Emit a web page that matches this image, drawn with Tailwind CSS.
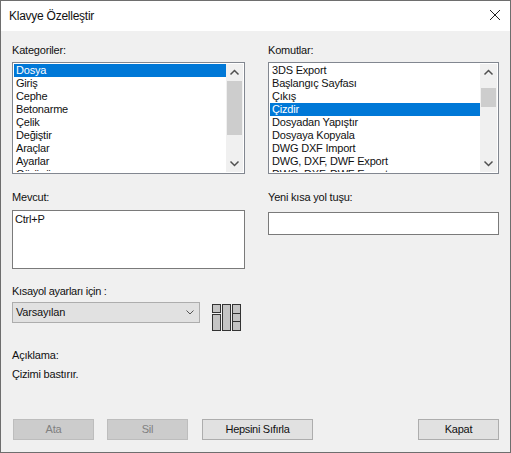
<!DOCTYPE html>
<html><head><meta charset="utf-8"><script src="https://cdn.jsdelivr.net/npm/@tailwindcss/browser@4"></script></head>
<body class="m-0">
<div class="w-[511px] h-[453px] flex flex-col overflow-hidden bg-[#f0f0f0] border border-[#6e6e6e] text-[11px] tracking-[-0.2px] leading-[13px] text-[#111] font-['Liberation_Sans',sans-serif]">
  <div class="h-[30px] shrink-0 bg-white flex items-center justify-between pl-[8px] pr-[9px]">
    <span class="text-[12px] tracking-[-0.25px]">Klavye Özelleştir</span>
    <svg class="w-[12px] h-[12px] mb-[2px]" viewBox="0 0 12 12" fill="none" stroke="#222" stroke-width="1"><path d="M1 1l10 10M11 1L1 11"/></svg>
  </div>
  <div class="flex-1 flex flex-col pl-[11px] pr-[11px] pt-[13px] pb-[12px]">
    <div class="grid grid-cols-[233px_231px] gap-x-[23px]">
      <div>
        <div class="h-[18px]">Kategoriler:</div>
        <div class="h-[112px] border border-[#828790] bg-white flex p-[1px] overflow-hidden">
          <ul class="w-[212px] overflow-hidden">
            <li class="h-[13px] bg-[#0078d7] text-white pl-[2px]">Dosya</li>
            <li class="h-[13px] pl-[2px]">Giriş</li>
            <li class="h-[13px] pl-[2px]">Cephe</li>
            <li class="h-[13px] pl-[2px]">Betonarme</li>
            <li class="h-[13px] pl-[2px]">Çelik</li>
            <li class="h-[13px] pl-[2px]">Değiştir</li>
            <li class="h-[13px] pl-[2px]">Araçlar</li>
            <li class="h-[13px] pl-[2px]">Ayarlar</li>
            <li class="h-[13px] pl-[2px]">Görünüm</li>
          </ul>
          <div class="w-[17px] bg-[#f0f0f0] flex flex-col">
            <svg class="w-[17px] h-[17px] shrink-0" viewBox="0 0 17 17" fill="none" stroke="#505050" stroke-width="1.5"><path d="M4.5 10.5l4-4 4 4"/></svg>
            <div class="w-[15px] h-[54px] ml-[1px] bg-[#cdcdcd]"></div>
            <div class="flex-1"></div>
            <svg class="w-[17px] h-[17px] shrink-0" viewBox="0 0 17 17" fill="none" stroke="#505050" stroke-width="1.5"><path d="M4.5 6.5l4 4 4-4"/></svg>
          </div>
        </div>
      </div>
      <div>
        <div class="h-[18px]">Komutlar:</div>
        <div class="h-[112px] border border-[#828790] bg-white flex p-[1px] overflow-hidden">
          <ul class="w-[210px] overflow-hidden">
            <li class="h-[13px] pl-[2px]">3DS Export</li>
            <li class="h-[13px] pl-[2px]">Başlangıç Sayfası</li>
            <li class="h-[13px] pl-[2px]">Çıkış</li>
            <li class="h-[13px] bg-[#0078d7] text-white pl-[2px]">Çizdir</li>
            <li class="h-[13px] pl-[2px]">Dosyadan Yapıştır</li>
            <li class="h-[13px] pl-[2px]">Dosyaya Kopyala</li>
            <li class="h-[13px] pl-[2px]">DWG DXF Import</li>
            <li class="h-[13px] pl-[2px]">DWG, DXF, DWF Export</li>
            <li class="h-[13px] pl-[2px]">DWG, DXF, DWF Export</li>
          </ul>
          <div class="w-[17px] bg-[#f0f0f0] flex flex-col">
            <svg class="w-[17px] h-[17px] shrink-0" viewBox="0 0 17 17" fill="none" stroke="#505050" stroke-width="1.5"><path d="M4.5 10.5l4-4 4 4"/></svg>
            <div class="w-[15px] h-[19px] ml-[1px] mt-[7px] bg-[#cdcdcd]"></div>
            <div class="flex-1"></div>
            <svg class="w-[17px] h-[17px] shrink-0" viewBox="0 0 17 17" fill="none" stroke="#505050" stroke-width="1.5"><path d="M4.5 6.5l4 4 4-4"/></svg>
          </div>
        </div>
      </div>
    </div>
    <div class="grid grid-cols-[233px_231px] gap-x-[23px] mt-[17px]">
      <div>
        <div class="h-[19px]">Mevcut:</div>
        <div class="h-[59px] border border-[#7a7a7a] bg-white px-[2px] pt-[2px]">Ctrl+P</div>
      </div>
      <div>
        <div class="h-[21px]">Yeni kısa yol tuşu:</div>
        <div class="h-[23px] border border-[#7a7a7a] bg-white"></div>
      </div>
    </div>
    <div class="mt-[16px] h-[13px] tracking-[-0.3px]">Kısayol ayarları için :</div>
    <div class="mt-[4px] flex items-start">
      <div class="w-[188px] h-[21px] border border-[#adadad] bg-[#e1e1e1] flex items-center justify-between pl-[3px] pr-[5px]">
        <span>Varsayılan</span>
        <svg class="w-[8px] h-[5px]" viewBox="0 0 8 5" fill="none" stroke="#555" stroke-width="1"><path d="M.5 .5L4 4 7.5 .5"/></svg>
      </div>
      <div class="ml-[12px] mt-[2px] w-[29px] h-[27px] grid grid-cols-3 gap-x-[1px]">
        <div class="flex flex-col gap-[1px]"><div class="h-[9px] bg-[#c4c4c4] border border-[#333]"></div><div class="flex-1 bg-[#c4c4c4] border border-[#333]"></div></div>
        <div class="bg-[#c4c4c4] border border-[#333]"></div>
        <div class="flex flex-col"><div class="flex-1 bg-[#c4c4c4] border border-[#333]"></div><div class="flex-1 bg-[#c4c4c4] border border-t-0 border-[#333]"></div><div class="flex-1 bg-[#c4c4c4] border border-t-0 border-[#333]"></div></div>
      </div>
    </div>
    <div class="mt-[18px] h-[13px]">Açıklama:</div>
    <div class="mt-[6px] h-[13px]">Çizimi bastırır.</div>
    <div class="mt-auto flex pl-[1px]">
      <button class="w-[81px] h-[21px] border border-[#bdbdbd] bg-[#cccccc] text-[#808080]">Ata</button>
      <button class="w-[81px] h-[21px] ml-[13px] border border-[#bdbdbd] bg-[#cccccc] text-[#808080]">Sil</button>
      <button class="w-[111px] h-[21px] ml-[14px] border border-[#adadad] bg-[#e1e1e1] tracking-[-0.3px]">Hepsini Sıfırla</button>
      <button class="w-[81px] h-[21px] ml-auto border border-[#adadad] bg-[#e1e1e1]">Kapat</button>
    </div>
  </div>
</div>
</body></html>
